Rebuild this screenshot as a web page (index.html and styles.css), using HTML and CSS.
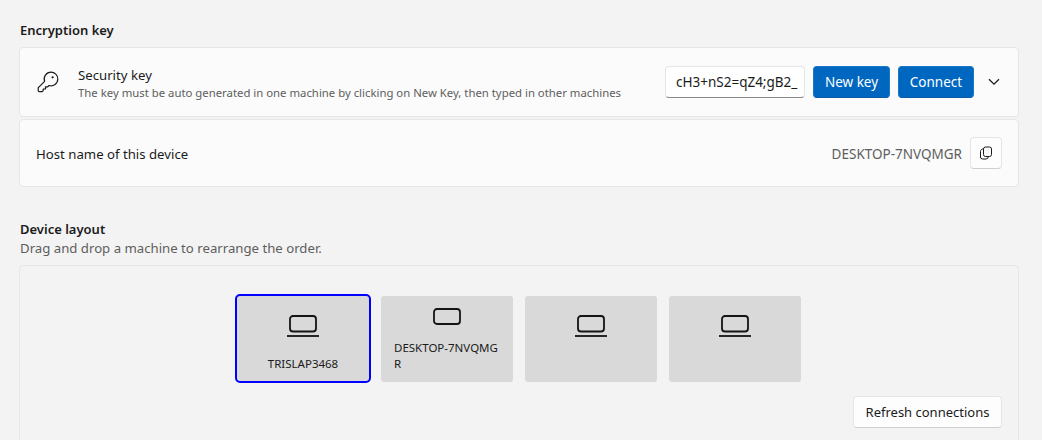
FILE: index.html
```html
<!DOCTYPE html>
<html lang="en">
<head>
<meta charset="utf-8">
<title>Encryption key</title>
<link rel="stylesheet" href="styles.css">
</head>
<body>
<main class="page">
  <h2 class="section-title">Encryption key</h2>
  <section class="card card-key">
    <svg class="key-icon" width="22" height="22" viewBox="0 0 22 22" fill="none" stroke="#1b1b1b" stroke-width="1.2" stroke-linejoin="round"><path d="M14 1.200a6.800 6.800 0 0 1 6.800 6.800 6.800 6.800 0 0 1-8.800 6.500l-1.300 1.300H8.500v2.200H6.200v1.700l-1 1H2.400a1.200 1.200 0 0 1-1.200-1.200v-2.300a1.200 1.200 0 0 1 .4-.9l6-6a6.800 6.800 0 0 1 6.400-9.100z"/><circle cx="15.600" cy="6.300" r="1.100" fill="#1b1b1b" stroke="none"/></svg>
    <div class="key-text">
      <div class="key-title">Security key</div>
      <div class="key-desc">The key must be auto generated in one machine by clicking on New Key, then typed in other machines</div>
    </div>
    <div class="key-input">cH3+nS2=qZ4;gB2_</div>
    <button class="btn btn-primary btn-new">New key</button>
    <button class="btn btn-primary btn-connect">Connect</button>
    <svg class="chevron" width="12" height="8" viewBox="0 0 12 8" fill="none" stroke="#1b1b1b" stroke-width="1.300"><path d="M1 1.200 6 6.200 11 1.200"/></svg>
  </section>
  <section class="card card-host">
    <div class="host-label">Host name of this device</div>
    <div class="host-name">DESKTOP-7NVQMGR</div>
    <button class="btn btn-copy" aria-label="Copy">
      <svg width="14" height="14" viewBox="0 0 14 14" fill="none" stroke="#1b1b1b" stroke-width="1"><rect x="4.500" y="1" width="8" height="9.500" rx="2"/><path d="M4.500 3.200A2.300 2.300 0 0 0 1.500 5.500v5.500a2 2 0 0 0 2 2h3.500a2.300 2.300 0 0 0 2.200-2.500"/></svg>
    </button>
  </section>
  <h2 class="section-title layout-title">Device layout</h2>
  <p class="layout-sub">Drag and drop a machine to rearrange the order.</p>
  <section class="layout-card">
    <div class="devices">
      <div class="device device-selected">
        <svg class="laptop" width="32" height="22" viewBox="0 0 32 22" fill="none" stroke="#141414" stroke-width="1.800"><rect x="3" y="1" width="26" height="15.500" rx="3"/><path d="M0 21h32"/></svg>
        <div class="device-name">TRISLAP3468</div>
      </div>
      <div class="device device-desktop">
        <svg class="monitor" width="28" height="18" viewBox="0 0 28 18" fill="none" stroke="#141414" stroke-width="1.800"><rect x="1" y="1" width="26" height="15" rx="3"/></svg>
        <div class="device-name">DESKTOP-7NVQMGR</div>
      </div>
      <div class="device">
        <svg class="laptop" width="32" height="22" viewBox="0 0 32 22" fill="none" stroke="#141414" stroke-width="1.800"><rect x="3" y="1" width="26" height="15.500" rx="3"/><path d="M0 21h32"/></svg>
      </div>
      <div class="device">
        <svg class="laptop" width="32" height="22" viewBox="0 0 32 22" fill="none" stroke="#141414" stroke-width="1.800"><rect x="3" y="1" width="26" height="15.500" rx="3"/><path d="M0 21h32"/></svg>
      </div>
    </div>
    <div class="refresh-row"><button class="btn btn-refresh">Refresh connections</button></div>
  </section>
</main>
</body>
</html>
```
FILE: styles.css
```css
* { box-sizing: border-box; }
html, body { margin: 0; height: 440px; overflow: hidden; }
body { background: #f3f3f3; color: #1b1b1b; font-family: "Noto Sans", "Open Sans", sans-serif; font-size: 14px; }
.page { padding: 21px 23px 0 19px; height: 440px; overflow: hidden; }
.section-title { margin: 0 0 0 1px; font-size: 13px; line-height: 18px; font-weight: 600; }
.card { background: #fbfbfb; border: 1px solid #e6e6e6; border-radius: 4px; display: flex; align-items: center; }
.card-key { height: 70px; margin-top: 8px; padding: 0 18px 0 17px; }
.key-icon { flex: none; }
.key-text { flex: 1; margin-left: 19px; padding-top: 2px; }
.key-title { font-size: 13.200px; line-height: 18px; }
.key-desc { font-size: 11.350px; line-height: 15px; padding-top: 1px; color: #5e5e5e; }
.key-input { width: 140px; height: 32px; background: #fff; border: 1px solid #e5e5e5; border-bottom-color: #8a8a8a; border-radius: 4px; padding: 0 0 0 10px; font-size: 13.500px; line-height: 30px; white-space: nowrap; overflow: hidden; }
.btn { font-family: inherit; font-size: 13.500px; height: 32px; border-radius: 4px; padding: 0; cursor: default; display: block; }
.btn-primary { background: #0067c0; color: #fff; border: 1px solid #1a76c6; border-bottom-color: #0a5ca6; }
.btn-new { width: 77px; margin-left: 8px; }
.btn-connect { width: 76px; margin-left: 8px; }
.chevron { margin-left: 14px; flex: none; }
.card-host { height: 68px; margin-top: 2px; padding: 0 16px; }
.host-label { flex: 1; font-size: 13.200px; padding-top: 2px; }
.host-name { color: #5e5e5e; font-size: 13.500px; margin-right: 8px; padding-top: 2px; }
.btn-copy { width: 32px; background: #fdfdfd; border: 1px solid #e5e5e5; border-bottom-color: #cfcfcf; display: flex; align-items: center; justify-content: center; }
.layout-title { margin-top: 33px; }
.layout-sub { margin: 1px 0 0 1px; font-size: 13.200px; line-height: 18px; color: #5e5e5e; }
.layout-card { height: 200px; margin-top: 8px; background: #f3f3f3; border: 1px solid #e6e6e6; border-radius: 4px; padding: 28px 16px 0; }
.devices { display: flex; align-items: center; margin-left: 199px; gap: 12px; height: 90px; }
.device { width: 132px; height: 86px; background: #d9d9d9; border-radius: 3px; padding-top: 19px; display: flex; flex-direction: column; align-items: center; font-size: 11.500px; }
.device-selected { width: 136px; height: 89px; align-self: flex-start; border: 2px solid #0000ff; border-radius: 5px; margin-right: -2px; padding-top: 19px; }
.device-name { margin-top: 19px; line-height: 16px; }
.device-desktop { padding: 12px 13px 0; }
.device-desktop .device-name { margin-top: 14px; width: 100%; word-break: break-all; }
.refresh-row { display: flex; justify-content: flex-end; margin-top: 12px; }
.btn-refresh { width: 149px; background: #fdfdfd; color: #1b1b1b; border: 1px solid #e5e5e5; border-bottom-color: #cfcfcf; font-size: 13px; }
```
